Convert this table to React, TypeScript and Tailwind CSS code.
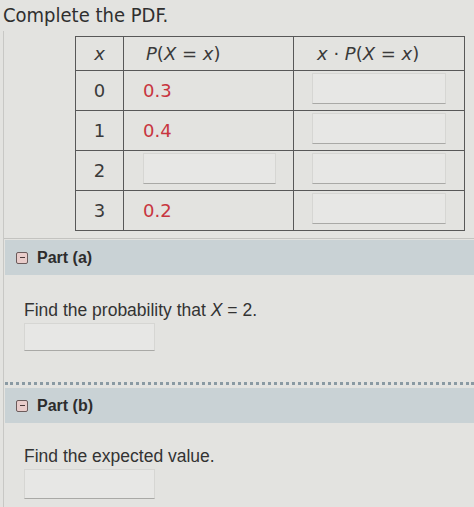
const rows = [
  { x: '0', p: '0.3' },
  { x: '1', p: '0.4' },
  { x: '2', p: null },
  { x: '3', p: '0.2' },
];

function AnswerBox({ className = '' }: { className?: string }) {
  return (
    <div
      className={`h-[31px] bg-[#e7e7e5] border border-[#d6d6d3] border-b-[#a9a9a6] ${className}`}
    />
  );
}

function PartHeader({ label }: { label: string }) {
  return (
    <div className="h-[35px] bg-[#c9d2d5] flex items-center pl-[11px] gap-[9px]">
      <span className="w-[12px] h-[12px] border-[1.5px] border-[#6b5b5b] rounded-[2px] bg-[#e9cdcb] flex items-center justify-center">
        <span className="w-[5px] h-[1.5px] bg-[#4a3a3a]" />
      </span>
      <span className="font-['Liberation_Sans',Arial,sans-serif] font-bold text-[16px] text-[#2d2d2d]">
        {label}
      </span>
    </div>
  );
}

export default function App() {
  return (
    <div className="w-[474px] h-[507px] overflow-hidden bg-[#e3e3e0] text-[#333] flex flex-col">
      <p className="h-[31px] shrink-0 pl-[3px] pt-[3px] font-['DejaVu_Sans_Condensed','DejaVu_Sans',Verdana,sans-serif] text-[20px] leading-[24px] text-[#2f2f2f]">
        Complete the PDF.
      </p>

      <div className="flex-1 ml-[3px] border-l border-[#c8c8c5]">
        {/* PDF table */}
        <div className="pl-[71px] pt-[5px] pb-[7px] border-b border-[#c3c3c0]">
          <table className="border-collapse font-['DejaVu_Sans',Verdana,sans-serif] text-[18px] text-[#3a3a3a]">
            <thead>
              <tr className="h-[34px]">
                <th className="w-[48px] border-[1.5px] border-[#585858] font-normal italic text-center">x</th>
                <th className="w-[170px] border-[1.5px] border-[#585858] font-normal text-left pl-[22px]">
                  <span className="italic">P</span>(<span className="italic">X</span> = <span className="italic">x</span>)
                </th>
                <th className="w-[171px] border-[1.5px] border-[#585858] font-normal text-left pl-[23px]">
                  <span className="italic">x</span> · <span className="italic">P</span>(<span className="italic">X</span> = <span className="italic">x</span>)
                </th>
              </tr>
            </thead>
            <tbody>
              {rows.map((r) => (
                <tr key={r.x} className="h-[40px]">
                  <td className="border-[1.5px] border-[#585858] text-center">{r.x}</td>
                  <td className="border-[1.5px] border-[#585858] pl-[19px] pr-[17px]">
                    {r.p ? (
                      <span className="text-[#c8353f]">{r.p}</span>
                    ) : (
                      <AnswerBox className="mt-[1px] mb-[6px]" />
                    )}
                  </td>
                  <td className="border-[1.5px] border-[#585858] pl-[18px] pr-[18px]">
                    <AnswerBox className="mt-[1px] mb-[6px]" />
                  </td>
                </tr>
              ))}
            </tbody>
          </table>
        </div>

        {/* Part (a) */}
        <div className="mt-[1px] ml-[1px]">
          <PartHeader label="Part (a)" />
          <div className="pl-[19px] pt-[25px] pb-[31px] font-['Liberation_Sans',Arial,sans-serif] text-[17.5px] text-[#333]">
            <p className="leading-[20px]">
              Find the probability that <span className="italic">X</span> = 2.
            </p>
            <div className="mt-[3px] w-[131px] h-[28px] bg-[#e7e7e5] border border-[#d6d6d3] border-b-[#a9a9a6]" />
          </div>
          <div className="border-t-[3px] border-dotted border-[#8a9aa3]" />
        </div>

        {/* Part (b) */}
        <div className="mt-[3px] ml-[1px]">
          <PartHeader label="Part (b)" />
          <div className="pl-[19px] pt-[23px] font-['Liberation_Sans',Arial,sans-serif] text-[17.5px] text-[#333]">
            <p className="leading-[20px]">Find the expected value.</p>
            <div className="mt-[3px] w-[131px] h-[30px] bg-[#e7e7e5] border border-[#d6d6d3] border-b-[#a9a9a6]" />
          </div>
        </div>
      </div>
    </div>
  );
}
